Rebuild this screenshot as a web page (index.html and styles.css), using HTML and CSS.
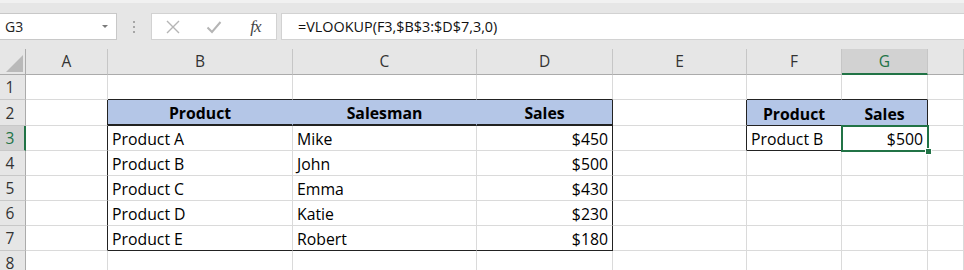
FILE: index.html
```html
<!DOCTYPE html>
<html lang="en">
<head>
    <meta charset="UTF-8">
    <meta name="viewport" content="width=device-width, initial-scale=1.0">
    <title>VLOOKUP example</title>

    <link rel="stylesheet" href="styles.css">
</head>
<body>
    <div class="formula-bar">
        <div class="name-box">
            <span>G3</span>
            <span class="drop-arrow"></span>
        </div>

        <div class="grip">
            <span></span>
            <span></span>
            <span></span>
        </div>

        <div class="fx-box">
            <span class="fx-slot">
                <svg width="14" height="14" viewBox="0 0 14 14">
                    <path d="M1 1 L13 13 M13 1 L1 13" stroke="#b5b5b5" stroke-width="1.4" fill="none"/>
                </svg>
            </span>
            <span class="fx-slot">
                <svg width="16" height="14" viewBox="0 0 16 14">
                    <path d="M1.5 7.5 L6 12 L14.5 2" stroke="#b5b5b5" stroke-width="2" fill="none"/>
                </svg>
            </span>
            <span class="fx-slot fx-text">fx</span>
        </div>

        <div class="formula-input">=VLOOKUP(F3,$B$3:$D$7,3,0)</div>
    </div>

    <div class="sheet">
        <div class="row col-head">
            <div class="corner"><span class="corner-mark"></span></div>
            <div class="ch">A</div>
            <div class="ch">B</div>
            <div class="ch">C</div>
            <div class="ch">D</div>
            <div class="ch">E</div>
            <div class="ch">F</div>
            <div class="ch ch-active">G</div>
            <div class="ch"></div>
        </div>

        <div class="row">
            <div class="rh">1</div>
            <div class="cell"></div>
            <div class="cell edge-b"></div>
            <div class="cell edge-b"></div>
            <div class="cell edge-b"></div>
            <div class="cell"></div>
            <div class="cell edge-b"></div>
            <div class="cell edge-b"></div>
            <div class="cell"></div>
        </div>

        <div class="row row-head">
            <div class="rh">2</div>
            <div class="cell edge-r"></div>
            <div class="cell hd hd-main">Product</div>
            <div class="cell hd hd-main">Salesman</div>
            <div class="cell hd hd-main edge-r">Sales</div>
            <div class="cell edge-r"></div>
            <div class="cell hd">Product</div>
            <div class="cell hd edge-r">Sales</div>
            <div class="cell"></div>
        </div>

        <div class="row">
            <div class="rh rh-active">3</div>
            <div class="cell edge-r"></div>
            <div class="cell">Product A</div>
            <div class="cell">Mike</div>
            <div class="cell num edge-r">$450</div>
            <div class="cell edge-r"></div>
            <div class="cell edge-b">Product B</div>
            <div class="cell num active">
                $500
                <span class="selection"></span>
                <span class="fill-handle"></span>
            </div>
            <div class="cell"></div>
        </div>

        <div class="row">
            <div class="rh">4</div>
            <div class="cell edge-r"></div>
            <div class="cell">Product B</div>
            <div class="cell">John</div>
            <div class="cell num edge-r">$500</div>
            <div class="cell"></div>
            <div class="cell"></div>
            <div class="cell"></div>
            <div class="cell"></div>
        </div>

        <div class="row">
            <div class="rh">5</div>
            <div class="cell edge-r"></div>
            <div class="cell">Product C</div>
            <div class="cell">Emma</div>
            <div class="cell num edge-r">$430</div>
            <div class="cell"></div>
            <div class="cell"></div>
            <div class="cell"></div>
            <div class="cell"></div>
        </div>

        <div class="row">
            <div class="rh">6</div>
            <div class="cell edge-r"></div>
            <div class="cell">Product D</div>
            <div class="cell">Katie</div>
            <div class="cell num edge-r">$230</div>
            <div class="cell"></div>
            <div class="cell"></div>
            <div class="cell"></div>
            <div class="cell"></div>
        </div>

        <div class="row">
            <div class="rh">7</div>
            <div class="cell edge-r"></div>
            <div class="cell edge-b">Product E</div>
            <div class="cell edge-b">Robert</div>
            <div class="cell num edge-r edge-b">$180</div>
            <div class="cell"></div>
            <div class="cell"></div>
            <div class="cell"></div>
            <div class="cell"></div>
        </div>

        <div class="row">
            <div class="rh">8</div>
            <div class="cell"></div>
            <div class="cell"></div>
            <div class="cell"></div>
            <div class="cell"></div>
            <div class="cell"></div>
            <div class="cell"></div>
            <div class="cell"></div>
            <div class="cell"></div>
        </div>
    </div>
</body>
</html>
```

FILE: styles.css
```css
* {
    box-sizing: border-box;
}

body {
    margin: 0;
    width: 964px;
    height: 270px;
    overflow: hidden;
    background-color: #ffffff;
    font-family: 'Open Sans', 'Liberation Sans', sans-serif;
    color: #000000;
}

/* formula bar */

.formula-bar {
    display: flex;
    align-items: flex-start;
    height: 49px;
    padding-top: 10px;
    border-top: 3px solid #f1f1f1;
    background-color: #e6e6e6;
}

.name-box {
    display: flex;
    align-items: center;
    justify-content: space-between;
    width: 117px;
    height: 27px;
    padding: 0 8px 0 5px;
    background-color: #ffffff;
    border: 1px solid #c8c8c8;
    border-left: none;
    font-size: 14px;
    color: #222222;
}

.drop-arrow {
    width: 0;
    height: 0;
    border-left: 3px solid transparent;
    border-right: 3px solid transparent;
    border-top: 3px solid #7a7a7a;
}

.grip {
    display: flex;
    flex-direction: column;
    align-items: center;
    gap: 3px;
    width: 34px;
    padding-top: 8px;
}

.grip span {
    width: 2px;
    height: 2px;
    background-color: #a6a6a6;
}

.fx-box {
    display: flex;
    width: 126px;
    height: 27px;
    background-color: #ffffff;
    border: 1px solid #d2d2d2;
}

.fx-slot {
    display: flex;
    align-items: center;
    justify-content: center;
    width: 42px;
}

.fx-text {
    font-family: 'Liberation Serif', serif;
    font-style: italic;
    font-size: 17px;
    color: #444444;
    letter-spacing: -1px;
}

.formula-input {
    flex: 1;
    height: 27px;
    margin-left: 4px;
    padding-left: 16px;
    background-color: #ffffff;
    border: 1px solid #d2d2d2;
    border-right: none;
    font-size: 14.4px;
    line-height: 25px;
    color: #111111;
}

/* sheet grid */

.row {
    display: grid;
    grid-template-columns: 26px 82px 185px 184px 136px 134px 95px 86px 1fr;
    height: 25px;
}

.row-head {
    height: 26px;
}

.col-head {
    height: 26px;
    background-color: #e6e6e6;
}

.corner {
    position: relative;
    border-right: 1px solid #ababab;
    border-bottom: 1px solid #ababab;
}

.corner-mark {
    position: absolute;
    right: 2px;
    bottom: 2px;
    width: 0;
    height: 0;
    border-left: 17px solid transparent;
    border-bottom: 17px solid #b9b9b9;
}

.ch {
    display: flex;
    align-items: flex-end;
    justify-content: center;
    padding-bottom: 2px;
    border-right: 1px solid #c6c6c6;
    border-bottom: 1px solid #ababab;
    font-size: 15.5px;
    color: #333333;
}

.ch-active {
    background-color: #d2d2d2;
    color: #217346;
    border-bottom: 2px solid #217346;
    padding-bottom: 1px;
}

.rh {
    display: flex;
    align-items: flex-end;
    justify-content: center;
    padding: 0 5px 1px 0;
    background-color: #e6e6e6;
    border-right: 1px solid #ababab;
    border-bottom: 1px solid #c8c8c8;
    font-size: 15.5px;
    color: #333333;
}

.rh-active {
    background-color: #d2d2d2;
    color: #217346;
    border-right: 2px solid #217346;
    padding-right: 4px;
}

.cell {
    display: flex;
    align-items: flex-end;
    padding: 0 4px 2px 4px;
    border-right: 1px solid #dadada;
    border-bottom: 1px solid #dadada;
    font-size: 15.8px;
    line-height: 1;
    white-space: nowrap;
}

.num {
    justify-content: flex-end;
}

.edge-r {
    border-right-color: #222222;
}

.edge-b {
    border-bottom-color: #222222;
}

.hd {
    justify-content: center;
    background-color: #b4c6e7;
    border-right-color: #b4c6e7;
    border-bottom-color: #222222;
    font-weight: bold;
}

.hd.edge-r {
    border-right-color: #222222;
}

.hd-main {
    border-bottom-width: 2px;
}

/* active cell */

.active {
    position: relative;
}

.selection {
    position: absolute;
    top: -1px;
    left: -1px;
    right: -2px;
    bottom: -2px;
    border: 2px solid #217346;
}

.fill-handle {
    position: absolute;
    right: -5px;
    bottom: -5px;
    width: 7px;
    height: 7px;
    background-color: #217346;
    border: 1px solid #ffffff;
}
```
